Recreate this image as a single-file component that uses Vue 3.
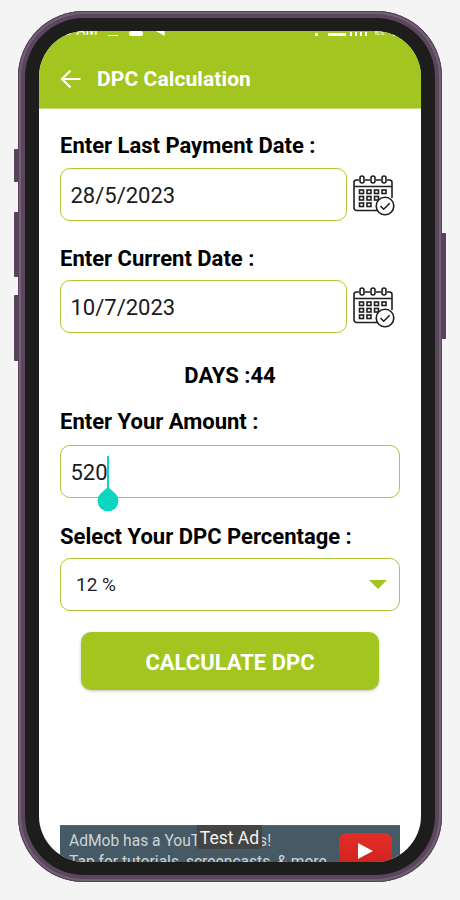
<script setup>
const dates = [
  { label: 'Enter Last Payment Date :', value: '28/5/2023' },
  { label: 'Enter Current Date :', value: '10/7/2023' }
]
</script>

<template>
  <div class="page">
    <div class="phone">
      <span class="side side-l1"></span>
      <span class="side side-l2"></span>
      <span class="side side-l3"></span>
      <span class="side side-r"></span>
      <div class="bezel">
        <div class="screen">
          <header class="appbar">
            <div class="status">
              <div class="status-left">
                <span class="clock">9 AM</span>
                <span class="dash"></span>
                <span class="blob"></span>
                <span class="tri"></span>
              </div>
              <div class="status-right">
                <span class="dot"></span>
                <span class="volte"></span>
                <span class="bars"><i></i><i></i><i></i><i></i></span>
                <span class="speed">B/s</span>
                <span class="batt"></span>
              </div>
            </div>
            <div class="bar-row">
              <svg class="back" width="22" height="20" viewBox="0 0 22 20" fill="none" stroke="#fff" stroke-width="2.200">
                <path d="M20.500 10H2.500" />
                <path d="M10.500 1.500L2 10l8.500 8.500" />
              </svg>
              <h1 class="title">DPC Calculation</h1>
            </div>
          </header>

          <main class="content">
            <section v-for="d in dates" :key="d.value" class="date-block">
              <label class="label">{{ d.label }}</label>
              <div class="date-row">
                <div class="field date-field">{{ d.value }}</div>
                <svg class="cal" width="42" height="42" viewBox="0 0 42 42" fill="none" stroke="#1f1f1f" stroke-width="1.600">
                  <path d="M6 6H3.500A2.500 2.500 0 0 0 1 8.500V34a2.500 2.500 0 0 0 2.500 2.500H24" />
                  <path d="M12 6h5M23 6h5M34 6h2.500A2.500 2.500 0 0 1 39 8.500V24" />
                  <path d="M1 12.500h38" />
                  <rect x="7" y="2" width="4" height="7" rx="2" />
                  <rect x="18" y="2" width="4" height="7" rx="2" />
                  <rect x="29" y="2" width="4" height="7" rx="2" />
                  <rect x="6.500" y="16" width="4" height="3.500" />
                  <rect x="14" y="16" width="4" height="3.500" />
                  <rect x="21.500" y="16" width="4" height="3.500" />
                  <rect x="29" y="16" width="4" height="3.500" />
                  <rect x="6.500" y="22.500" width="4" height="3.500" />
                  <rect x="14" y="22.500" width="4" height="3.500" />
                  <rect x="21.500" y="22.500" width="4" height="3.500" />
                  <rect x="6.500" y="29" width="4" height="3.500" />
                  <rect x="14" y="29" width="4" height="3.500" />
                  <circle cx="32" cy="32" r="8.800" fill="#fff" />
                  <path d="M27.500 32l3.200 3.200 6-6" />
                </svg>
              </div>
            </section>

            <p class="days">DAYS :44</p>

            <label class="label amount-label">Enter Your Amount :</label>
            <div class="field amount-field">
              <span class="amount-text">520</span>
              <span class="cursor"></span>
              <svg class="handle" width="24" height="28" viewBox="0 0 24 28">
                <path d="M12 3L4.600 9.400a10.500 10.500 0 1 0 14.800 0z" fill="#0dd6c0" />
              </svg>
            </div>

            <label class="label percent-label">Select Your DPC Percentage :</label>
            <div class="field select-field">
              <span>12 %</span>
              <span class="arrow"></span>
            </div>

            <button class="calc" type="button">CALCULATE DPC</button>
          </main>

          <aside class="ad">
            <div class="ad-text">
              <p class="ad-one">AdMob has a YouTube tricks!</p>
              <p class="ad-two">Tap for tutorials, screencasts, &amp; more</p>
            </div>
            <div class="yt"><span class="yt-play"></span></div>
            <span class="test-ad">Test Ad</span>
          </aside>
        </div>
      </div>
    </div>
  </div>
</template>

<style>
html, body { margin: 0; background: #f4f4f4; }
</style>

<style scoped>
* { box-sizing: border-box; }
.page {
  width: 460px;
  height: 900px;
  padding: 11px 18px 0;
  background: #f4f4f4;
  font-family: Roboto, "Liberation Sans", sans-serif;
  color: #000;
}
.phone {
  position: relative;
  width: 424px;
  height: 871px;
  padding: 7px;
  border-radius: 66px;
  background: #5d4560;
  box-shadow: inset 0 0 0 1px #5a3f5e, inset 0 0 0 3px #6e6470;
}
.side {
  position: absolute;
  width: 4px;
  background: #5a3f5e;
  border-radius: 1px 0 0 1px;
}
.side-l1 { left: -4px; top: 138px; height: 33px; }
.side-l2 { left: -4px; top: 201px; height: 65px; }
.side-l3 { left: -4px; top: 284px; height: 66px; }
.side-r { right: -4px; top: 222px; width: 4px; height: 106px; border-radius: 0 1px 1px 0; }
.bezel {
  height: 100%;
  padding: 13px 14px;
  border-radius: 59px;
  background: #1d1d1b;
}
.screen {
  position: relative;
  display: flex;
  flex-direction: column;
  height: 831px;
  overflow: hidden;
  border-radius: 46px;
  background: #fff;
}
.appbar {
  height: 78px;
  flex: none;
  background: #a3c520;
  border-bottom: 1px solid #c8dc78;
}
.status {
  display: flex;
  justify-content: space-between;
  align-items: flex-end;
  height: 5px;
  overflow: hidden;
  padding: 0 12px 0 26px;
  color: #fff;
}
.status-left, .status-right { display: flex; align-items: flex-end; }
.clock { font-size: 14px; line-height: 14px; margin-bottom: -1px; margin-right: 10px; }
.dash { width: 10px; height: 4px; border-bottom: 1px solid #fff; margin-right: 11px; }
.blob { width: 14px; height: 5px; background: #fff; border-radius: 5px; margin-right: 13px; }
.tri { width: 9px; height: 5px; background: #fff; clip-path: polygon(0 0, 100% 0, 100% 100%); }
.status-right { margin-right: 8px; gap: 3px; }
.dot { width: 3px; height: 3px; background: #fff; margin-right: 7px; }
.volte { width: 18px; height: 3px; background: #fff; }
.bars { display: flex; gap: 3px; align-items: flex-end; margin-right: 5px; margin-left: 1px; }
.bars i { width: 2px; height: 4px; background: #fff; }
.speed { font-size: 6px; line-height: 6px; margin-right: 6px; }
.batt { width: 8px; height: 1px; background: #fff; }
.bar-row {
  display: flex;
  align-items: center;
  height: 72px;
  padding: 14px 0 0 21px;
}
.back { display: block; margin-right: 15px; }
.title {
  margin: 0;
  font-size: 21px;
  font-weight: 700;
  color: #fff;
  letter-spacing: 0.100px;
}
.content {
  display: flex;
  flex-direction: column;
  flex: 1;
  padding: 0 21px;
}
.date-block { display: flex; flex-direction: column; }
.date-block:first-child { padding-top: 24px; }
.date-block + .date-block { padding-top: 25px; }
.label {
  display: block;
  font-size: 22px;
  font-weight: 700;
  line-height: 26px;
}
.date-row {
  display: flex;
  align-items: center;
  gap: 6px;
  margin-top: 9px;
}
.date-block + .date-block .date-row { margin-top: 8px; }
.field {
  display: flex;
  align-items: center;
  height: 53px;
  border: 1.500px solid #aac83a;
  border-radius: 10px;
  background: #fff;
  font-size: 22px;
  padding: 1px 0 0 9.500px;
  color: #1a1a1a;
}
.date-field { width: 287px; }
.cal { display: block; flex: none; }
.days {
  margin: 30px 0 0;
  width: 340px;
  text-align: center;
  font-size: 22px;
  font-weight: 700;
  line-height: 26px;
}
.amount-label { margin-top: 20px; }
.amount-field {
  position: relative;
  width: 340px;
  margin-top: 10px;
}
.cursor {
  position: absolute;
  left: 45.500px;
  top: 10px;
  width: 2px;
  height: 32px;
  background: #0dd6c0;
}
.handle {
  position: absolute;
  left: 34.800px;
  top: 37.500px;
  display: block;
}
.percent-label { margin-top: 26px; }
.select-field {
  justify-content: space-between;
  width: 340px;
  margin-top: 8px;
  padding: 0 12px 0 15px;
  font-size: 19px;
  color: #222;
}
.arrow {
  width: 0;
  height: 0;
  border-left: 9px solid transparent;
  border-right: 9px solid transparent;
  border-top: 9px solid #a3c520;
}
.calc {
  display: block;
  width: 298px;
  height: 58px;
  margin: 21px 0 0 21px;
  padding: 2px 0 0;
  border: 0;
  border-radius: 10px;
  background: #a3c520;
  box-shadow: 0 1px 3px rgba(0, 0, 0, 0.25);
  color: #fff;
  font-family: inherit;
  font-size: 22px;
  font-weight: 700;
}
.ad {
  position: relative;
  flex: none;
  width: 340px;
  height: 56px;
  margin: 0 0 -19px 21px;
  background: #455a64;
  border-top: 1px solid #54666f;
}
.ad-text { padding: 5px 0 0 9px; color: #cdd5d9; font-size: 15.600px; line-height: 21px; white-space: nowrap; }
.ad-text p { margin: 0; }
.yt {
  position: absolute;
  left: 279px;
  top: 7px;
  display: flex;
  align-items: center;
  justify-content: center;
  width: 53px;
  height: 42px;
  padding-bottom: 6px;
  border-radius: 8px;
  background: linear-gradient(#e52d27, #c9201c);
}
.yt-play {
  width: 0;
  height: 0;
  border-left: 15px solid #fff;
  border-top: 8.500px solid transparent;
  border-bottom: 8.500px solid transparent;
}
.test-ad {
  position: absolute;
  left: 137px;
  top: -1px;
  width: 65px;
  height: 24px;
  padding-top: 1px;
  border-radius: 0 0 3px 3px;
  background: #444444;
  color: #f2f2f2;
  font-size: 17.500px;
  line-height: 24px;
  text-align: center;
  white-space: nowrap;
}
</style>
